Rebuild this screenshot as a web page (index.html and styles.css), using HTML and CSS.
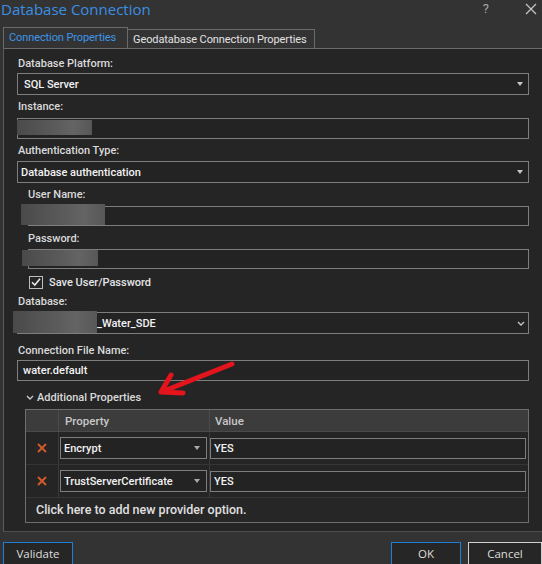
FILE: index.html
```html
<!DOCTYPE html>
<html>
<head>
<meta charset="utf-8">
<link rel="stylesheet" href="styles.css">
</head>
<body>
<div class="dialog">
  <div class="titlebar">
    <div class="title">Database Connection</div>
    <div class="tb-btns">
      <span class="help">?</span>
      <svg class="close" width="12" height="12" viewBox="0 0 12 12"><path d="M1 1L11 11M11 1L1 11" stroke="#c8c8c8" stroke-width="1.2" fill="none"/></svg>
    </div>
  </div>
  <div class="tabs">
    <div class="tab active">Connection Properties</div>
    <div class="tab inactive">Geodatabase Connection Properties</div>
  </div>
  <div class="panel">
    <div class="lbl">Database Platform:</div>
    <div class="select s-platform"><span class="val">SQL Server</span><span class="tri"></span></div>

    <div class="lbl m3">Instance:</div>
    <div class="input i-instance"><span class="blob b-instance"></span></div>

    <div class="lbl m3">Authentication Type:</div>
    <div class="select s-auth"><span class="val">Database authentication</span><span class="tri"></span></div>

    <div class="lbl sub m3">User Name:</div>
    <div class="input sub-input i-user"><span class="blob b-user"></span></div>

    <div class="lbl sub m4">Password:</div>
    <div class="input sub-input i-pass"><span class="blob b-pass"></span></div>

    <div class="check-row">
      <span class="checkbox"><svg width="12" height="12" viewBox="0 0 12 12"><path d="M2 6.2L4.8 9L10 2.8" stroke="#e8e8e8" stroke-width="1.6" fill="none"/></svg></span>
      <span class="check-lbl">Save User/Password</span>
    </div>

    <div class="lbl m3">Database:</div>
    <div class="select s-db"><span class="blob b-db"></span><span class="val">_Water_SDE</span><svg class="chev" width="8" height="5" viewBox="0 0 8 5"><path d="M1 1L4 4L7 1" stroke="#c8c8c8" stroke-width="1.3" fill="none"/></svg></div>

    <div class="lbl m8">Connection File Name:</div>
    <div class="input i-conn"><span class="val">water.default</span></div>

    <div class="addl">
      <svg class="chev-addl" width="8" height="5" viewBox="0 0 8 5"><path d="M1 1L4 4L7 1" stroke="#c8c8c8" stroke-width="1.4" fill="none"/></svg>
      <span>Additional Properties</span>
    </div>

    <div class="table">
      <div class="trow thead">
        <div class="c1"></div>
        <div class="c2"><span class="th">Property</span></div>
        <div class="c3"><span class="th">Value</span></div>
      </div>
      <div class="trow tbody">
        <div class="c1"><svg width="10" height="10" viewBox="0 0 10 10"><path d="M1 1L9 9M9 1L1 9" stroke="#cf5a2c" stroke-width="2" fill="none"/></svg></div>
        <div class="c2"><div class="cell-select"><span class="val">Encrypt</span><span class="tri small"></span></div></div>
        <div class="c3"><div class="cell-input"><span class="val">YES</span></div></div>
      </div>
      <div class="trow tbody">
        <div class="c1"><svg width="10" height="10" viewBox="0 0 10 10"><path d="M1 1L9 9M9 1L1 9" stroke="#cf5a2c" stroke-width="2" fill="none"/></svg></div>
        <div class="c2"><div class="cell-select"><span class="val">TrustServerCertificate</span><span class="tri small"></span></div></div>
        <div class="c3"><div class="cell-input"><span class="val">YES</span></div></div>
      </div>
      <div class="add-row">Click here to add new provider option.</div>
    </div>
  </div>
  <div class="footer">
    <button class="btn primary validate">Validate</button>
    <div class="footer-right">
      <button class="btn primary">OK</button>
      <button class="btn cancel">Cancel</button>
    </div>
  </div>
  <svg class="annot" width="100" height="50" viewBox="0 0 100 50">
    <path d="M82 9L14 36" stroke="#e3141c" stroke-width="5" stroke-linecap="round" fill="none"/>
    <path d="M21 20L11 37L33 38" stroke="#e3141c" stroke-width="5" stroke-linecap="round" stroke-linejoin="round" fill="none"/>
  </svg>
</div>
</body>
</html>
```
FILE: styles.css
```css
* { box-sizing: border-box; margin: 0; padding: 0; }
html, body { width: 542px; height: 564px; overflow: hidden; }
body { background: #333333; font-family: Roboto, "Open Sans", sans-serif; color: #dcdcdc; }
.dialog { position: relative; width: 542px; height: 564px; }

.titlebar { height: 27px; display: flex; justify-content: space-between; align-items: flex-start; }
.title { font-family: "Open Sans", sans-serif; color: #3a8fe3; font-size: 15px; line-height: 18px; padding-left: 1px; }
.tb-btns { display: flex; align-items: center; padding-top: 2px; }
.help { color: #a8a8a8; font-size: 13px; line-height: 14px; margin-right: 36px; }
.close { margin-right: 5px; }

.tabs { height: 21px; display: flex; align-items: flex-end; padding-left: 3px; }
.tab { font-size: 11px; letter-spacing: -0.1px; line-height: 19px; border: 1px solid #6a6a6a; border-bottom: none; white-space: nowrap; }
.tab.active { width: 125px; height: 21px; color: #3d96ea; padding-left: 5px; line-height: 20px; }
.tab.inactive { width: 187px; height: 19px; border-left: none; padding-left: 5px; color: #e2e2e2; }

.panel { margin-left: 3px; height: 484px; border-left: 1px solid #5a5a5a; border-top: 1px solid #6a6a6a; border-bottom: 1px solid #4e4e4e; background: #252526; padding: 6px 0 0 13px; }

.lbl { height: 17px; line-height: 17px; font-size: 11px; font-weight: 500; padding-left: 1px; color: #dadada; }
.lbl.sub { padding-left: 11px; }
.m3 { margin-top: 3px; }
.m4 { margin-top: 4px; }
.m8 { margin-top: 8px; }

.select, .input { position: relative; width: 512px; border: 1px solid #7e7e7e; background: #232324; display: flex; align-items: center; }
.select { height: 22px; margin-top: 1px; }
.s-auth { margin-top: 2px; }
.s-db { margin-top: 2px; }
.input { height: 21px; margin-top: 3px; }
.sub-input { width: 501px; height: 20px; margin-left: 11px; }
.i-pass { margin-top: 2px; }
.i-conn { margin-top: 1px; }

.val { font-size: 11px; font-weight: 500; color: #f2f2f2; white-space: nowrap; }
.s-platform .val { padding-left: 6px; }
.s-auth .val { padding-left: 3px; }
.s-db .val { padding-left: 79px; }
.i-conn .val { padding-left: 5px; }

.tri { margin-left: auto; margin-right: 5px; width: 0; height: 0; border-left: 3px solid transparent; border-right: 3px solid transparent; border-top: 4px solid #c8c8c8; }
.tri.small { margin-right: 6px; border-top-color: #aaaaaa; }
.chev { margin-left: auto; margin-right: 3px; }

.blob { position: absolute; background: linear-gradient(90deg, #4a4a4a 0%, #5c5c5c 55%, #646464 75%, #575757 100%); }
.b-instance { left: -1px; top: 1px; width: 75px; height: 15px; }
.b-user { left: -8px; top: -3px; width: 84px; height: 21px; }
.b-pass { left: -7px; top: 0px; width: 76px; height: 16px; }
.b-db { left: -5px; top: -2px; width: 84px; height: 22px; }

.check-row { height: 16px; margin-top: 5px; margin-left: 12px; display: flex; align-items: center; }
.checkbox { width: 14px; height: 13px; border: 1px solid #bdbdbd; display: flex; align-items: center; justify-content: center; }
.check-lbl { margin-left: 6px; font-size: 11px; font-weight: 500; color: #e6e6e6; }

.addl { height: 16px; margin-top: 8px; margin-left: 9px; display: flex; align-items: center; font-size: 11px; font-weight: 500; color: #dadada; }
.chev-addl { margin-right: 3px; }

.table { margin-top: 4px; margin-left: 8px; width: 504px; height: 114px; border: 1px solid #6e6e6e; }
.trow { display: flex; }
.thead { height: 22px; background: #3c3c3c; border-bottom: 1px solid #4a4a4a; }
.tbody { height: 33px; border-bottom: 1px solid #353535; align-items: center; }
.c1 { width: 33px; height: 100%; border-right: 1px solid #3a3a3a; display: flex; align-items: center; justify-content: center; }
.thead .c1 { border-right-color: #4c4c4c; }
.c2 { width: 151px; height: 100%; border-right: 1px solid #3a3a3a; display: flex; align-items: center; padding-left: 1px; }
.thead .c2 { border-right-color: #4c4c4c; }
.c3 { flex: 1; height: 100%; display: flex; align-items: center; }
.th { font-size: 11.5px; font-weight: 500; color: #c8c8c8; padding-left: 5px; }
.cell-select { width: 147px; height: 22px; border: 1px solid #7e7e7e; background: #232324; display: flex; align-items: center; }
.cell-select .val, .cell-input .val { padding-left: 3px; }
.cell-input { width: 316px; height: 21px; border: 1px solid #7e7e7e; background: #232324; display: flex; align-items: center; }
.add-row { height: 24px; line-height: 24px; padding-left: 10px; font-size: 12.5px; font-weight: 500; color: #e0e0e0; background: #262627; }

.footer { padding-top: 10px; display: flex; justify-content: space-between; }
.footer-right { display: flex; gap: 7px; }
.btn { height: 24px; font-family: "Open Sans", sans-serif; font-size: 11.5px; color: #dedede; background: #262626; border: 1px solid #1e7fd8; line-height: 22px; }
.validate { margin-left: 3px; width: 70px; }
.footer-right .primary { width: 70px; }
.cancel { width: 74px; border-color: #d0d0d0; }

.annot { position: absolute; left: 150px; top: 355px; }
```
